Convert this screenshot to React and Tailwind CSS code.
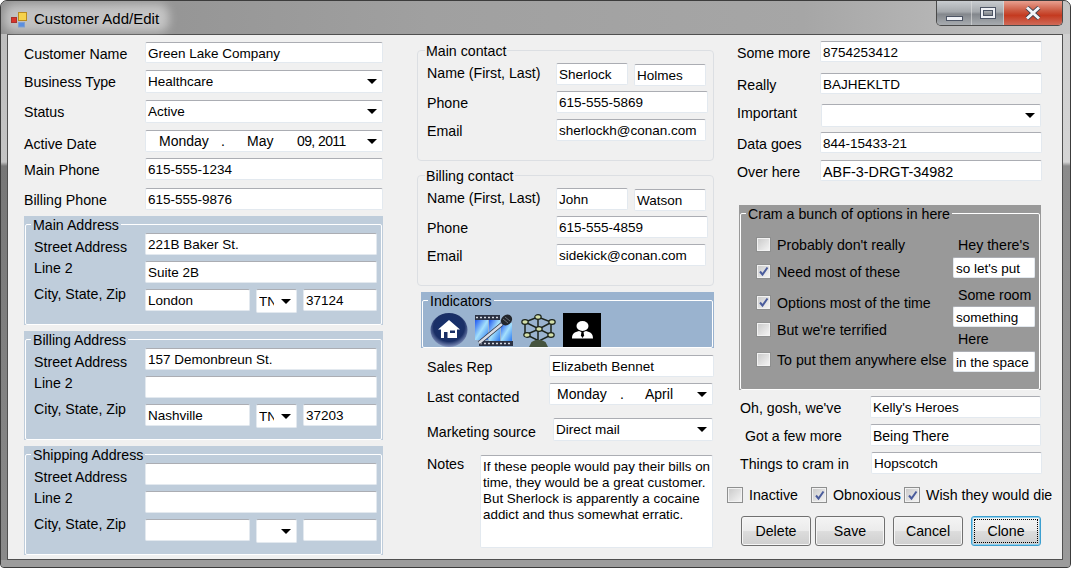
const font = { fontFamily: '"Liberation Sans", Arial, sans-serif' };

function Field({ className = "", children }) {
  return (
    <div className={"flex items-center shrink-0 bg-white border border-[#e3e9ef] border-t-[#abadb3] rounded-[2px] pl-[2px] pt-[2px] text-[13.5px] whitespace-nowrap overflow-hidden " + className}>
      {children}
    </div>
  );
}

function Arrow() {
  return (
    <svg width="10" height="5" viewBox="0 0 10 5" className="shrink-0 -mt-[2px]">
      <path d="M0 0h10L5 5z" fill="#000" />
    </svg>
  );
}

function Combo({ className = "", value }) {
  return (
    <Field className={"justify-between pr-[5px] " + className}>
      <span className="-mt-[2px]">{value}</span>
      <Arrow />
    </Field>
  );
}

function Row({ label, labelClass = "w-[121px] pt-1", className = "", children }) {
  return (
    <div className={"flex items-start " + className}>
      <div className={"shrink-0 whitespace-nowrap " + labelClass}>{label}</div>
      {children}
    </div>
  );
}

function Check({ checked, label, className = "", box = "w-[15px] h-[15px]" }) {
  return (
    <div className={"flex items-center shrink-0 h-[15px] whitespace-nowrap " + className}>
      <div className={"shrink-0 border border-[#8e8f8f] bg-[linear-gradient(135deg,#c8c8c8,#f6f6f6)] shadow-[inset_0_0_0_1px_#f2f2f2] flex items-center justify-center " + box}>
        {checked && (
          <svg width="11" height="11" viewBox="0 0 11 11">
            <path d="M2 5.500l2.500 3L9.500 1.500" fill="none" stroke="#4a5c9c" strokeWidth="2" />
          </svg>
        )}
      </div>
      <span className="ml-[6px]">{label}</span>
    </div>
  );
}

function Btn({ className = "", focused, children }) {
  return (
    <div
      className={
        "w-[70px] h-[30px] flex items-center justify-center rounded-[3px] border bg-[linear-gradient(to_bottom,#f4f4f4,#ebebeb_48%,#dcdcdc_52%,#cfcfcf)] " +
        (focused ? "border-[#3c9fd0] shadow-[inset_0_0_0_1px_#8fd0ee] " : "border-[#707070] shadow-[inset_0_0_0_1px_#f6f6f6] ") +
        className
      }
    >
      {focused ? (
        <div className="w-[64px] h-[24px] flex items-center justify-center border border-dotted border-black">{children}</div>
      ) : (
        children
      )}
    </div>
  );
}

function Address({ title, street, line2, city, state, zip, className = "" }) {
  return (
    <div className={"h-[109px] px-px bg-[#bfcddb] " + className}>
      <fieldset className="h-[109px] border border-white rounded-[2px] pl-[8px]">
        <legend className="ml-[-3px] px-[2px] leading-4 translate-y-px">{title}</legend>
        <Row label="Street Address" labelClass="w-[111px] pt-[6px]" className="mt-px">
          <Field className="w-[232px] h-[22px]">{street}</Field>
        </Row>
        <Row label="Line 2" labelClass="w-[111px] -mt-px" className="mt-[6px]">
          <Field className="w-[232px] h-[22px]">{line2}</Field>
        </Row>
        <Row label="City, State, Zip" labelClass="w-[111px] -mt-[3px]" className="mt-[6px]">
          <Field className="w-[105px] h-[22px]">{city}</Field>
          <Field className="w-[41px] h-[24px] ml-[6px] pr-[5px] justify-between">
            <span className="w-[15px] overflow-hidden">{state}</span>
            <Arrow />
          </Field>
          <Field className="w-[74px] h-[22px] ml-[6px]">{zip}</Field>
        </Row>
      </fieldset>
    </div>
  );
}

function Contact({ title, first, last, phone, email, className = "" }) {
  return (
    <fieldset className={"h-[119px] border border-[#dcdfe3] rounded-[4px] pl-[9px] " + className}>
      <legend className="ml-[-2px] px-px leading-4 translate-y-px">{title}</legend>
      <Row label="Name (First, Last)" labelClass="w-[129px] pt-[2px]" className="mt-[5px]">
        <Field className="w-[72px] h-[22px]">{first}</Field>
        <Field className="w-[72px] h-[22px] ml-[6px] mt-px">{last}</Field>
      </Row>
      <Row label="Phone" labelClass="w-[129px] pt-1" className="mt-[5px]">
        <Field className="w-[152px] h-[22px]">{phone}</Field>
      </Row>
      <Row label="Email" labelClass="w-[129px] pt-1" className="mt-[6px]">
        <Field className="w-[150px] h-[22px]">{email}</Field>
      </Row>
    </fieldset>
  );
}

function DateBox({ className = "", pad, first, day, rest }) {
  return (
    <Field className={"justify-between pr-[5px] " + className}>
      <div className={"flex text-[14px] -mt-[2px] " + pad}>
        <span className={first}>{day}</span>
        {rest}
      </div>
      <Arrow />
    </Field>
  );
}

function WindowIcon() {
  return (
    <svg width="17" height="17" viewBox="0 0 17 17" className="shrink-0">
      <rect x="7.500" y="1.500" width="8" height="8" fill="#f6d24a" stroke="#b98a1e" />
      <rect x="0.500" y="6.500" width="5" height="5" fill="#d8342c" stroke="#a8322c" />
      <rect x="7.500" y="11.500" width="6" height="4.500" fill="#5b8fe0" stroke="#7f9fd0" />
    </svg>
  );
}

function HomeIcon() {
  return (
    <svg width="38" height="34" viewBox="0 0 38 34" className="shrink-0">
      <defs>
        <radialGradient id="homeBall" cx="50%" cy="42%" r="58%">
          <stop offset="0" stopColor="#14306e" />
          <stop offset="0.72" stopColor="#1a2f66" />
          <stop offset="1" stopColor="#8292bc" />
        </radialGradient>
      </defs>
      <ellipse cx="19" cy="17" rx="18.500" ry="17" fill="url(#homeBall)" />
      <path d="M19 7L8 16.500h3V25h16v-8.500h3z" fill="#fff" />
      <rect x="20" y="17.500" width="5" height="2.500" fill="#1a2f66" />
      <rect x="14" y="19" width="3.500" height="6" fill="#1a2f66" />
    </svg>
  );
}

function MediaIcon() {
  return (
    <svg width="40" height="34" viewBox="0 0 40 34" className="shrink-0">
      <defs>
        <linearGradient id="filmBlue" x1="0" y1="0" x2="1" y2="1">
          <stop offset="0" stopColor="#1d55f0" />
          <stop offset="0.5" stopColor="#a4e0fc" />
          <stop offset="1" stopColor="#2a78f0" />
        </linearGradient>
      </defs>
      <rect x="1" y="2" width="25" height="5" fill="#2b3244" />
      <path d="M2 4.500h23" stroke="#d4d8e0" strokeWidth="1.500" strokeDasharray="2 2" />
      <rect x="1" y="7" width="13" height="20" fill="url(#filmBlue)" />
      <rect x="15" y="7" width="11" height="21" fill="url(#filmBlue)" />
      <rect x="27" y="10" width="11" height="18" fill="url(#filmBlue)" />
      <rect x="5" y="28" width="34" height="5" fill="#2b3244" />
      <path d="M6 30.500h32" stroke="#d4d8e0" strokeWidth="1.500" strokeDasharray="2 2" />
      <path d="M5 30L28 11" stroke="#2b3244" strokeWidth="4" />
      <path d="M5 30L28 11" stroke="#d8dce4" strokeWidth="2.500" />
      <ellipse cx="32.500" cy="7" rx="6" ry="5" transform="rotate(-40 32.500 7)" fill="#23262c" />
      <path d="M29 6l5 4M31 4l5 4" stroke="#6a6e78" strokeWidth="1" />
    </svg>
  );
}

function AtomIcon() {
  const balls = [[18, 4], [5, 9], [32, 9], [19, 16], [7, 22], [31, 22]];
  return (
    <svg width="37" height="34" viewBox="0 0 37 34" className="shrink-0">
      <path d="M18 4L5 9v13l14-6 12 6V9zM5 9l14 7 13-7M7 22l12 6 12-6M18 4v24" fill="none" stroke="#1c241c" strokeWidth="1.500" />
      <path d="M9 34l2.500-5 4-2h6l4 2 2.500 5z" fill="#46543f" />
      {balls.map(([x, y], i) => (
        <ellipse key={i} cx={x} cy={y} rx="3.200" ry="2.300" fill="#d4e0aa" stroke="#1c241c" strokeWidth="1.200" />
      ))}
    </svg>
  );
}

function PersonIcon() {
  return (
    <svg width="38" height="34" viewBox="0 0 38 34" className="shrink-0 bg-black">
      <ellipse cx="19.500" cy="13" rx="6" ry="5" fill="#fff" />
      <path d="M9 25.500c0-5 2.500-6.500 7-7.500l3.500 1.500L23 18c4.500 1 7 2.500 7 7.500z" fill="#fff" />
      <path d="M18.500 19h2l.6 3.500-1.600 2.500-1.600-2.500z" fill="#000" />
    </svg>
  );
}

export default function App() {
  return (
    <div style={font} className="w-[1071px] h-[568px] flex flex-col border border-[#3c3c3c] rounded-t-[7px] rounded-b-[4px] overflow-hidden text-[14.2px] leading-4 text-black bg-[#a0a0a0]">
      {/* Title bar */}
      <div className="relative h-[33px] shrink-0 flex items-start bg-[linear-gradient(to_right,#8f8f8f,#a0a0a0_40%,#a6a6a6_75%,#c4c4c4)]">
        <div className="absolute left-[3px] top-[3px] w-[165px] h-[28px] rounded-[10px] bg-white/45 blur-[5px]"></div>
        <div className="relative flex items-center ml-[10px] mt-[9px]">
          <WindowIcon />
          <span className="ml-[6px] text-[15px] leading-[18px]">Customer Add/Edit</span>
        </div>
        {/* Window buttons */}
        <div className="relative ml-auto mr-[7px] flex h-[25px] border border-t-0 border-[#4a4a4a] rounded-b-[5px] overflow-hidden">
          <div className="w-[35px] flex items-end justify-center pb-[4px] border-r border-[#e0e0e0]/60 bg-[linear-gradient(to_bottom,#c8ccd0,#a4a8ac_45%,#83878c_55%,#a8acb0)]">
            <div className="w-[17px] h-[5px] bg-[#f0f2f6] border border-[#4c5464]"></div>
          </div>
          <div className="w-[32px] flex items-center justify-center border-r border-[#e0e0e0]/60 bg-[linear-gradient(to_bottom,#c8ccd0,#a4a8ac_45%,#83878c_55%,#a8acb0)]">
            <div className="w-[16px] h-[12px] border border-[#4c5464] bg-transparent shadow-[inset_0_0_0_2px_#eef0f4] flex items-center justify-center">
              <div className="w-[10px] h-[6px] border border-[#4c5464]"></div>
            </div>
          </div>
          <div className="flex-1 w-[58px] flex items-center justify-center bg-[linear-gradient(to_bottom,#e8a090,#cc5a42_40%,#c43a20_60%,#d06a58)]">
            <svg width="18" height="14" viewBox="0 0 18 14">
              <path d="M3 1.500l12 11M15 1.500L3 12.500" fill="none" stroke="#3c4250" strokeWidth="4.500" />
              <path d="M3 1.500l12 11M15 1.500L3 12.500" fill="none" stroke="#f2f4f8" strokeWidth="3" />
            </svg>
          </div>
        </div>
      </div>

      <div className="flex flex-1 min-h-0">
        <div className="w-[6px] shrink-0 bg-[linear-gradient(to_bottom,#bdbdbd_0,#c4c4c4_128px,#777777_132px,#8a8a8a)]"></div>

        {/* Client area */}
        <div className="w-[1056px] h-[526px] shrink-0 flex border border-[#505050] bg-[#f0f0f0]">
          {/* Left column */}
          <div className="w-[359px] ml-[16px] shrink-0 pt-[7px]">
            <Row label="Customer Name"><Field className="w-[238px] h-[21px]">Green Lake Company</Field></Row>
            <Row label="Business Type" className="mt-[7px]"><Combo className="w-[238px] h-[23px]" value="Healthcare" /></Row>
            <Row label="Status" className="mt-[7px]"><Combo className="w-[238px] h-[23px]" value="Active" /></Row>
            <Row label="Active Date" labelClass="w-[121px] pt-[6px]" className="mt-[7px]">
              <DateBox
                className="w-[238px] h-[22px]"
                pad="pl-[11px]"
                first="w-[62px]"
                day="Monday"
                rest={
                  <>
                    <span className="w-[26px]">.</span>
                    <span className="w-[50px]">May</span>
                    <span className="tracking-[-0.6px]">09, 2011</span>
                  </>
                }
              />
            </Row>
            <Row label="Main Phone" className="mt-[6px]"><Field className="w-[238px] h-[22px]">615-555-1234</Field></Row>
            <Row label="Billing Phone" className="mt-[8px]"><Field className="w-[238px] h-[22px]">615-555-9876</Field></Row>
            <Address className="mt-[6px]" title="Main Address" street="221B Baker St." line2="Suite 2B" city="London" state="TN" zip="37124" />
            <Address className="mt-[6px]" title="Billing Address" street="157 Demonbreun St." city="Nashville" state="TN" zip="37203" />
            <Address className="mt-[6px]" title="Shipping Address" />
          </div>

          {/* Middle column */}
          <div className="w-[297px] ml-[34px] shrink-0 pt-[7px]">
            <Contact title="Main contact" first="Sherlock" last="Holmes" phone="615-555-5869" email="sherlockh@conan.com" />
            <Contact className="mt-[6px]" title="Billing contact" first="John" last="Watson" phone="615-555-4859" email="sidekick@conan.com" />

            <div className="ml-[4px] mt-[6px] w-[293px] h-[56px] px-px bg-[#9ab3cf]">
              <fieldset className="h-[56px] border border-white rounded-[2px] pl-[7px]">
                <legend className="ml-[-2px] px-[2px] leading-4 translate-y-px">Indicators</legend>
                <div className="flex mt-[5px]">
                  <HomeIcon />
                  <div className="ml-[6px]"><MediaIcon /></div>
                  <div className="ml-[6px]"><AtomIcon /></div>
                  <div className="ml-[6px]"><PersonIcon /></div>
                </div>
              </fieldset>
            </div>

            <Row label="Sales Rep" labelClass="w-[122px] pt-1" className="mt-[7px] pl-[10px]">
              <Field className="w-[165px] h-[22px]">Elizabeth Bennet</Field>
            </Row>
            <Row label="Last contacted" labelClass="w-[122px] pt-[6px]" className="mt-[6px] pl-[10px]">
              <DateBox
                className="w-[164px] h-[22px]"
                pad="pl-[5px]"
                first="w-[63px]"
                day="Monday"
                rest={
                  <>
                    <span className="w-[25px]">.</span>
                    <span>April</span>
                  </>
                }
              />
            </Row>
            <Row label="Marketing source" labelClass="w-[126px] pt-[6px]" className="mt-[13px] pl-[10px]">
              <Combo className="w-[160px] h-[23px]" value="Direct mail" />
            </Row>
            <Row label="Notes" labelClass="w-[53px] pt-px" className="mt-[14px] pl-[10px]">
              <div className="w-[233px] h-[93px] bg-white border border-[#e3e9ef] border-t-[#abadb3] rounded-[2px] pl-[2px] pt-[3px] text-[13.4px]">
                If these people would pay their bills on time, they would be a great customer. But Sherlock is apparently a cocaine addict and thus somewhat erratic.
              </div>
            </Row>
          </div>

          {/* Right column */}
          <div className="w-[316px] ml-[13px] shrink-0 pt-[6px]">
            <Row label="Some more" labelClass="w-[83px] pt-1" className="pl-[10px]"><Field className="w-[222px] h-[21px]">8754253412</Field></Row>
            <Row label="Really" labelClass="w-[83px] pt-1" className="mt-[11px] pl-[10px]"><Field className="w-[222px] h-[21px]">BAJHEKLTD</Field></Row>
            <Row label="Important" labelClass="w-[84px] pt-px" className="mt-[10px] pl-[10px]"><Combo className="w-[220px] h-[23px]" /></Row>
            <Row label="Data goes" labelClass="w-[83px] pt-1" className="mt-[5px] pl-[10px]"><Field className="w-[222px] h-[21px]">844-15433-21</Field></Row>
            <Row label="Over here" labelClass="w-[83px] pt-1" className="mt-[7px] pl-[10px]">
              <Field className="w-[222px] h-[21px]"><span className="text-[14.4px]">ABF-3-DRGT-34982</span></Field>
            </Row>

            <div className="ml-[12px] mt-[24px] w-[302px] h-[185px] px-px bg-[#999999]">
              <fieldset className="h-[185px] border border-white rounded-[2px]">
                <legend className="ml-[5px] px-[2px] leading-4 translate-y-px">Cram a bunch of options in here</legend>
                <div className="flex">
                  <div className="w-[212px] shrink-0 pl-[15px] pt-[16px]">
                    <Check label="Probably don't really" />
                    <Check checked label="Need most of these" className="mt-[12px]" />
                    <Check checked label="Options most of the time" className="mt-[16px]" />
                    <Check label="But we're terrified" className="mt-[12px]" />
                    <Check label="To put them anywhere else" className="mt-[15px]" />
                  </div>
                  <div className="w-[82px] shrink-0 pt-[16px]">
                    <div className="pl-[5px] whitespace-nowrap">Hey there's</div>
                    <Field className="w-[82px] h-[21px] mt-[4px]">so let's put</Field>
                    <div className="pl-[5px] mt-[9px] whitespace-nowrap">Some room</div>
                    <Field className="w-[82px] h-[21px] mt-[3px]">something</Field>
                    <div className="pl-[5px] mt-[4px]">Here</div>
                    <Field className="w-[82px] h-[21px] mt-[4px]">in the space</Field>
                  </div>
                </div>
              </fieldset>
            </div>

            <Row label="Oh, gosh, we've" labelClass="w-[130px] pt-1" className="mt-[6px] pl-[13px]"><Field className="w-[171px] h-[22px]">Kelly's Heroes</Field></Row>
            <Row label="Got a few more" labelClass="w-[125px] pt-1" className="mt-[6px] pl-[18px]">
              <Field className="w-[171px] h-[22px]"><span className="text-[14px]">Being There</span></Field>
            </Row>
            <Row label="Things to cram in" labelClass="w-[131px] pt-1" className="mt-[6px] pl-[13px]"><Field className="w-[171px] h-[22px]">Hopscotch</Field></Row>

            <div className="flex mt-[13px]">
              <Check label="Inactive" className="w-[84px] h-[16px]" box="w-[16px] h-[16px]" />
              <Check checked label="Obnoxious" className="w-[93px] h-[16px]" box="w-[16px] h-[16px]" />
              <Check checked label="Wish they would die" className="h-[16px]" box="w-[16px] h-[16px]" />
            </div>

            <div className="flex mt-[13px] pl-[14px]">
              <Btn>Delete</Btn>
              <Btn className="ml-[4px]">Save</Btn>
              <Btn className="ml-[8px]">Cancel</Btn>
              <Btn className="ml-[8px]" focused>Clone</Btn>
            </div>
          </div>
        </div>

        <div className="w-[7px] shrink-0 bg-[linear-gradient(to_bottom,#cfcfcf_0,#d4d4d4_128px,#8a8a8a_132px,#9a9a9a)]"></div>
      </div>

      <div className="h-[7px] shrink-0 bg-[#9c9c9c]"></div>
    </div>
  );
}
